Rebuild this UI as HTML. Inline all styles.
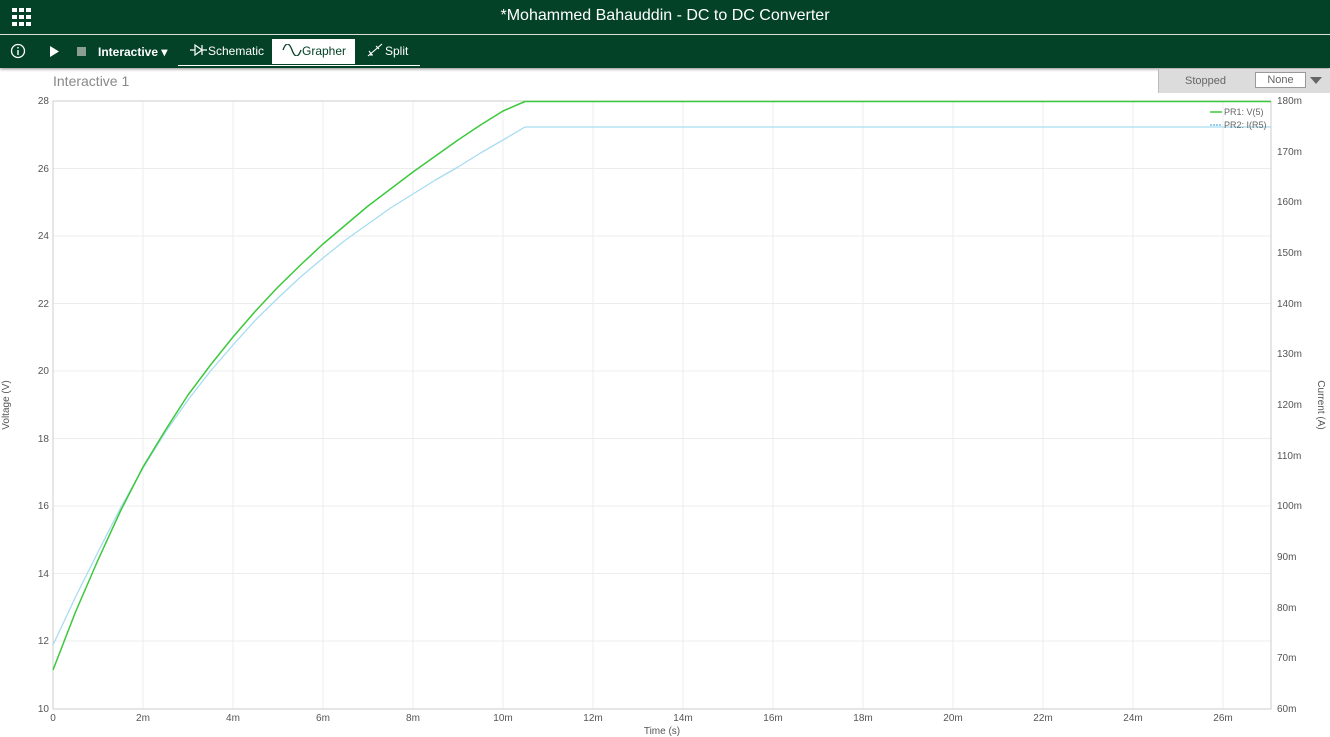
<!DOCTYPE html><html><head><style>
body{margin:0;width:1330px;height:737px;overflow:hidden;background:#fff;font-family:"Liberation Sans",sans-serif;position:relative}
.top{position:absolute;left:0;top:0;width:1330px;height:34px;background:#044228;color:#fff;font-size:16px;text-align:center;line-height:32px}
.line{position:absolute;top:34px;left:0;width:1330px;height:1px;background:#e8efe9}
.bar{position:absolute;top:35px;left:0;width:1330px;height:33px;background:#044228;color:#fff;font-size:12px;box-shadow:0 1px 3px #888}
.bar span{position:absolute;top:10px}
.tab{position:absolute;top:4px;height:25px;line-height:25px}
</style></head><body>
<div class="top">*Mohammed Bahauddin - DC to DC Converter</div>
<svg style="position:absolute;left:12px;top:8px" width="20" height="18"><g fill="#fff"><rect x="0" y="0" width="5" height="4"/><rect x="7" y="0" width="5" height="4"/><rect x="14" y="0" width="5" height="4"/><rect x="0" y="7" width="5" height="4"/><rect x="7" y="7" width="5" height="4"/><rect x="14" y="7" width="5" height="4"/><rect x="0" y="14" width="5" height="4"/><rect x="7" y="14" width="5" height="4"/><rect x="14" y="14" width="5" height="4"/></g></svg>
<div class="line"></div>
<div class="bar">
<svg style="position:absolute;left:10px;top:8px" width="16" height="16"><circle cx="8" cy="8" r="6.5" fill="none" stroke="#fff" stroke-width="1.3"/><rect x="7.3" y="7" width="1.4" height="5" fill="#fff"/><rect x="7.3" y="4" width="1.4" height="1.5" fill="#fff"/></svg>
<svg style="position:absolute;left:50px;top:11px" width="10" height="11"><path d="M0 0L9 5.5L0 11Z" fill="#fff"/></svg>
<div style="position:absolute;left:77px;top:12px;width:9px;height:9px;background:#8a9f92"></div>
<span style="left:98px;top:10px;font-weight:bold">Interactive ▾</span>
<div style="position:absolute;left:178px;top:30px;width:242px;height:1px;background:#fff"></div>
<div class="tab" style="left:190px"><svg width="18" height="12" style="vertical-align:-1px"><path d="M0 6H5M5 1V11L12 6Z M12 1V11M12 6H17" stroke="#fff" fill="none" stroke-width="1.2"/></svg>Schematic</div>
<div class="tab" style="left:272px;width:83px;background:#fff;color:#044228;padding-left:10px;box-sizing:border-box"><svg width="20" height="12" style="vertical-align:-1px"><path d="M1 6C4 -2 7 -2 10 6S16 14 19 6" stroke="#044228" fill="none" stroke-width="1.3"/></svg>Grapher</div>
<div class="tab" style="left:367px"><svg width="18" height="14" style="vertical-align:-2px"><path d="M1 13L15 1M2 8l3 4M9 3l3 3M3 12h3" stroke="#fff" fill="none" stroke-width="1.1"/></svg>Split</div>
</div>
<div style="position:absolute;left:53px;top:73px;font-size:14px;color:#888">Interactive 1</div>
<div style="position:absolute;left:1158px;top:69px;width:172px;height:24px;background:#dcdcdc;border-left:1px solid #bbb;font-size:11px;color:#666">
<span style="position:absolute;left:26px;top:6px">Stopped</span>
<div style="position:absolute;left:96px;top:3px;width:49px;height:14px;background:#fff;border:1px solid #999;text-align:center;line-height:14px">None</div>
<svg style="position:absolute;left:151px;top:8px" width="12" height="7"><path d="M0 0H12L6 7Z" fill="#666"/></svg>
</div>
<svg style="position:absolute;left:0;top:0" width="1330" height="737">
<g stroke="#ececec" stroke-width="1">
<path d="M143 101V709M233 101V709M323 101V709M413 101V709M503 101V709M593 101V709M683 101V709M773 101V709M863 101V709M953 101V709M1043 101V709M1133 101V709M1223 101V709"/>
<path d="M53 168.5H1271M53 236H1271M53 303.5H1271M53 371H1271M53 438.5H1271M53 506H1271M53 573.5H1271M53 641H1271"/>
</g>
<rect x="53" y="101" width="1218" height="608" fill="none" stroke="#ccc"/>
<g font-size="10" fill="#555" text-anchor="end">
<text x="49" y="104">28</text><text x="49" y="172">26</text><text x="49" y="239">24</text><text x="49" y="307">22</text><text x="49" y="374">20</text><text x="49" y="442">18</text><text x="49" y="509">16</text><text x="49" y="577">14</text><text x="49" y="644">12</text><text x="49" y="712">10</text>
</g>
<g font-size="10" fill="#555">
<text x="1277" y="104">180m</text><text x="1277" y="155">170m</text><text x="1277" y="205">160m</text><text x="1277" y="256">150m</text><text x="1277" y="307">140m</text><text x="1277" y="357">130m</text><text x="1277" y="408">120m</text><text x="1277" y="459">110m</text><text x="1277" y="509">100m</text><text x="1277" y="560">90m</text><text x="1277" y="611">80m</text><text x="1277" y="661">70m</text><text x="1277" y="712">60m</text>
</g>
<g font-size="10" fill="#555" text-anchor="middle">
<text x="53" y="721">0</text><text x="143" y="721">2m</text><text x="233" y="721">4m</text><text x="323" y="721">6m</text><text x="413" y="721">8m</text><text x="503" y="721">10m</text><text x="593" y="721">12m</text><text x="683" y="721">14m</text><text x="773" y="721">16m</text><text x="863" y="721">18m</text><text x="953" y="721">20m</text><text x="1043" y="721">22m</text><text x="1133" y="721">24m</text><text x="1223" y="721">26m</text>
<text x="662" y="734">Time (s)</text>
<text transform="translate(9,405) rotate(-90)">Voltage (V)</text>
<text transform="translate(1318,405) rotate(90)">Current (A)</text>
</g>
<polyline fill="none" stroke="#a8dcf0" stroke-width="1.3" stroke-linejoin="round" points="53,645 75.5,597 98,552 120.5,508 143,468 165.5,432 188,400 210.5,371 233,345 255.5,320 278,298 300.5,277 323,258 345.5,240 368,224 390.5,208 413,194 435.5,180 458,167 480.5,153 503,140 525,127 1271,127"/>
<polyline fill="none" stroke="#3cc83c" stroke-width="1.5" stroke-linejoin="round" points="53,670 75.5,612 98,560 120.5,511 143,467 165.5,430 188,395 210.5,365 233,337 255.5,311 278,287 300.5,265 323,244 345.5,225 368,206 390.5,189 413,172 435.5,156 458,140 480.5,125 503,111 525,101.5 1271,101.5"/>
<path d="M1210 112H1222" stroke="#3cc83c" stroke-width="1.5"/>
<path d="M1210 125H1222" stroke="#5ab0e0" stroke-width="1.3" stroke-dasharray="2,1"/>
<g font-size="9" fill="#666"><text x="1224" y="115">PR1: V(5)</text><text x="1224" y="128">PR2: I(R5)</text></g>
</svg>
</body></html>
